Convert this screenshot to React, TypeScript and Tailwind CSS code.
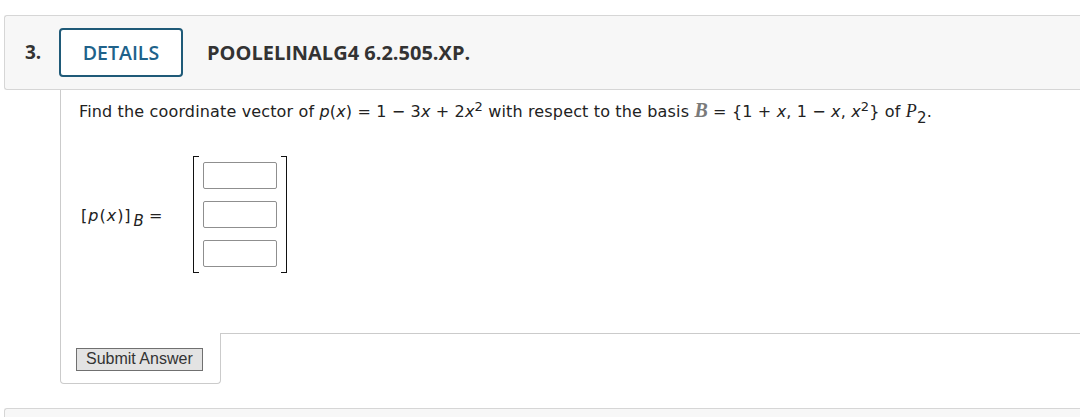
const VectorInput = () => (
  <input
    type="text"
    className="block h-[27px] w-[74px] rounded-[2px] border border-[#8f8f8f] bg-white px-1 text-[15px] outline-none"
  />
);

const Bracket: React.FC<{ side: "left" | "right" }> = ({ side }) => (
  <div
    className={
      side === "left"
        ? "w-[6px] self-stretch border-y-[1.5px] border-l-[1.5px] border-[#111]"
        : "w-[6px] self-stretch border-y-[1.5px] border-r-[1.5px] border-[#111]"
    }
  />
);

const Ital: React.FC<{ children: React.ReactNode }> = ({ children }) => <i className="italic">{children}</i>;

export default function App() {
  return (
    <div className="h-[417px] w-[1080px] overflow-hidden bg-white pt-[15px]">
      {/* question header */}
      <div className="ml-[4px] flex h-[75px] items-center rounded-tl-[3px] rounded-bl-[3px] border-y border-l border-[#d6d6d6] bg-[#f7f7f7] font-['Open_Sans',sans-serif]">
        <span className="ml-[20px] w-[34px] text-[19px] font-bold text-[#333]">3.</span>
        <button className="flex h-[49px] w-[124px] items-center justify-center rounded-[4px] border-2 border-[#1f5a78] bg-white text-[19.5px] font-semibold text-[#20628a]">
          DETAILS
        </button>
        <span className="ml-[24px] text-[20px] font-bold text-[#333]">POOLELINALG4 6.2.505.XP.</span>
      </div>

      {/* question body */}
      <div className="ml-[60px] h-[243px] border-l border-[#cbcbcb] pl-[18px] pt-[10px] font-['DejaVu_Sans',Verdana,sans-serif] text-[16px] text-[#222]">
        <p className="leading-[20px] tracking-[0.15px]">
          Find the coordinate vector of <Ital>p</Ital>(<Ital>x</Ital>) = 1 − 3<Ital>x</Ital> + 2<Ital>x</Ital>
          <sup className="text-[13px]">2</sup> with respect to the basis{" "}
          <span className="font-['Liberation_Serif',serif] text-[20px] font-bold italic text-[#7a7a7a]">B</span> ={" "}
          {"{"}1 + <Ital>x</Ital>, 1 − <Ital>x</Ital>, <Ital>x</Ital>
          <sup className="text-[13px]">2</sup>
          {"}"} of <span className="font-['Liberation_Serif',serif] text-[18px] italic">P</span>
          <span className="inline-block translate-y-[6px] text-[15px]">2</span>.
        </p>

        <div className="mt-[34px] flex h-[117px] items-center">
          <div className="w-[114px] pl-[2px] pt-[2px] tracking-[1px]">
            [<Ital>p</Ital>(<Ital>x</Ital>)]
            <span className="ml-[2px] inline-block translate-y-[5px] text-[15px] italic">B</span>
            <span className="ml-[4px]">=</span>
          </div>
          <div className="flex h-full">
            <Bracket side="left" />
            <div className="flex flex-col justify-center gap-[12px] px-[4px]">
              <VectorInput />
              <VectorInput />
              <VectorInput />
            </div>
            <Bracket side="right" />
          </div>
        </div>
      </div>

      {/* submit bar */}
      <div className="ml-[60px] flex">
        <div className="h-[51px] w-[161px] rounded-b-[4px] border-x border-b border-[#cbcbcb] pl-[15px] pt-[13px]">
          <button className="h-[23px] border border-[#707070] bg-[#e3e3e3] px-[9px] font-['Liberation_Sans',Arial,sans-serif] text-[16px] leading-[20px] text-[#333]">
            Submit Answer
          </button>
        </div>
        <div className="flex-1 border-t border-[#cbcbcb]" />
      </div>

      {/* next question header */}
      <div className="ml-[4px] mt-[24px] h-[40px] rounded-tl-[3px] border-t border-l border-[#d6d6d6] bg-[#f7f7f7]" />
    </div>
  );
}
